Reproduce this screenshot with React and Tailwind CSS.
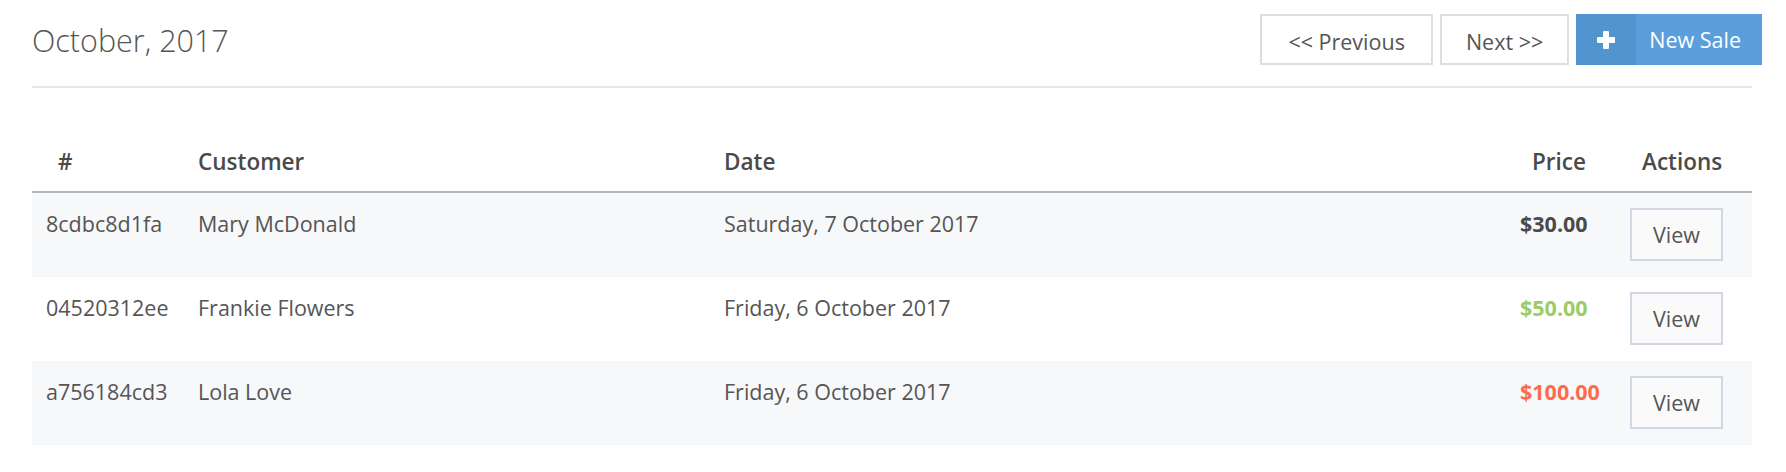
import React from "react";

const sales = [
  { id: "8cdbc8d1fa", customer: "Mary McDonald", date: "Saturday, 7 October 2017", price: "$30.00", color: "text-[#4a4a4a]" },
  { id: "04520312ee", customer: "Frankie Flowers", date: "Friday, 6 October 2017", price: "$50.00", color: "text-[#9ccc65]" },
  { id: "a756184cd3", customer: "Lola Love", date: "Friday, 6 October 2017", price: "$100.00", color: "text-[#ff6b4a]" },
];

const cols = "grid grid-cols-[152px_526px_796px_110px_1fr]";

const App = () => {
  return (
    <div
      className="min-h-screen bg-white pl-[32px] pr-[34px] text-[#555]"
      style={{ fontFamily: "'Open Sans', 'Liberation Sans', sans-serif" }}
    >
      <div className="flex items-start justify-between pt-[14px]">
        <h2 className="mt-[6px] text-[30.5px] font-light leading-[40px] text-[#555]">
          October, 2017
        </h2>
        <div className="-mr-[10px] flex gap-[7px]">
          <button className="flex h-[51px] items-center border-2 border-[#dedede] bg-white px-[26px] pt-[3px] text-[21.5px] leading-[31px] text-[#555]">
            &lt;&lt; Previous
          </button>
          <button className="flex h-[51px] items-center border-2 border-[#dedede] bg-white px-[24px] pt-[3px] text-[21.5px] leading-[31px] text-[#555]">
            Next &gt;&gt;
          </button>
          <button className="flex h-[51px] items-stretch text-[21.5px] leading-[31px] text-white">
            <span className="flex w-[60px] items-center justify-center bg-[#5294d0]">
              <svg width="18" height="18" viewBox="0 0 18 18">
                <rect x="6" y="0" width="6" height="18" rx="1" fill="#fff" />
                <rect x="0" y="6" width="18" height="6" rx="1" fill="#fff" />
              </svg>
            </span>
            <span className="flex items-center bg-[#5a9edb] pl-[13px] pr-[21px]">New Sale</span>
          </button>
        </div>
      </div>

      <div className="mt-[21px] h-[2px] bg-[#e6e6e6]" />

      <div className="mt-[43px] text-[21.5px] leading-[31px]">
        <div className={`${cols} border-b-2 border-[#b4b4b4] pt-[15px] pb-[14px] text-[22.5px] font-semibold text-[#4a4a4a]`}>
          <div className="pl-[26px]">#</div>
          <div className="pl-[14px]">Customer</div>
          <div className="pl-[14px]">Date</div>
          <div className="pl-[26px]">Price</div>
          <div className="pl-[26px]">Actions</div>
        </div>
        {sales.map((s, i) => (
          <div
            key={s.id}
            className={`${cols} h-[84px] pt-[15px] ${i % 2 === 0 ? "bg-[#f7f8fa]" : "bg-white"}`}
          >
            <div className="pl-[14px]">{s.id}</div>
            <div className="pl-[14px]">{s.customer}</div>
            <div className="pl-[14px]">{s.date}</div>
            <div className={`pl-[14px] font-bold ${s.color}`}>{s.price}</div>
            <div className="pl-[14px]">
              <button className="h-[53px] w-[93px] border-2 border-[#cfd8e3] bg-[#fafafa] text-[21.5px] text-[#555]">
                View
              </button>
            </div>
          </div>
        ))}
      </div>
    </div>
  );
};

export default App;
